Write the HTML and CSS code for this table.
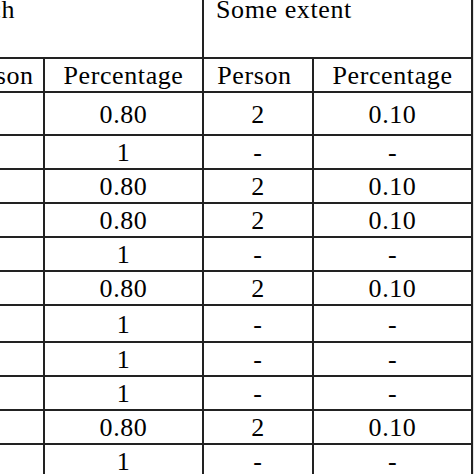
FILE: index.html
```html
<!DOCTYPE html>
<html>
<head>
<meta charset="utf-8">
<link rel="stylesheet" href="styles.css">
</head>
<body>
<div class="sheet">
<table class="grid">
<colgroup>
<col class="c-person-left"><col class="c-pct"><col class="c-person"><col class="c-pct">
</colgroup>
<thead>
<tr class="h-group">
<th colspan="2" class="group group-left">Much</th>
<th colspan="2" class="group">Some extent</th>
</tr>
<tr class="h34">
<th class="sub sub-left">Person</th>
<th class="sub">Percentage</th>
<th class="sub sub-right">Person</th>
<th class="sub">Percentage</th>
</tr>
</thead>
<tbody>
<tr class="h44"><td></td><td>0.80</td><td>2</td><td>0.10</td></tr>
<tr class="h33"><td></td><td>1</td><td>-</td><td>-</td></tr>
<tr class="h35"><td></td><td>0.80</td><td>2</td><td>0.10</td></tr>
<tr class="h33"><td></td><td>0.80</td><td>2</td><td>0.10</td></tr>
<tr class="h33"><td></td><td>1</td><td>-</td><td>-</td></tr>
<tr class="h35"><td></td><td>0.80</td><td>2</td><td>0.10</td></tr>
<tr class="h38"><td></td><td>1</td><td>-</td><td>-</td></tr>
<tr class="h32"><td></td><td>1</td><td>-</td><td>-</td></tr>
<tr class="h34"><td></td><td>1</td><td>-</td><td>-</td></tr>
<tr class="h34"><td></td><td>0.80</td><td>2</td><td>0.10</td></tr>
<tr class="h34"><td></td><td>1</td><td>-</td><td>-</td></tr>
</tbody>
</table>
</div>
</body>
</html>
```

FILE: styles.css
```css
html, body {
  margin: 0;
  padding: 0;
  background: #ffffff;
}

.sheet {
  width: 474px;
  height: 474px;
  overflow: hidden;
  background: #e4e4e4;
}

.grid {
  border-collapse: collapse;
  table-layout: fixed;
  width: 539px;
  margin-left: -68px;
  margin-top: -10px;
  background: #ffffff;
  font-family: "Liberation Serif", "Times New Roman", serif;
  font-size: 26px;
  letter-spacing: 0.6px;
  color: #000000;
}

.c-person-left { width: 111px; }
.c-person { width: 110px; }
.c-pct { width: 159px; }

.grid th,
.grid td {
  border: 2px solid #222222;
  padding: 2px 0 0 0;
  text-align: center;
  vertical-align: middle;
  font-weight: normal;
  line-height: 30px;
  white-space: nowrap;
  overflow: hidden;
}

.h-group { height: 67px; }

.grid th.group {
  text-align: left;
  vertical-align: top;
  padding: 3px 0 0 12px;
}

.grid th.group-left { padding-left: 18px; }

.grid th.sub-left { padding-left: 16px; }
.grid th.sub-right { padding-right: 7px; }

.h32 { height: 31px; }
.h33 { height: 32px; }
.h34 { height: 33px; }
.h35 { height: 34px; }
.h38 { height: 37px; }
.h44 { height: 43px; }
```
